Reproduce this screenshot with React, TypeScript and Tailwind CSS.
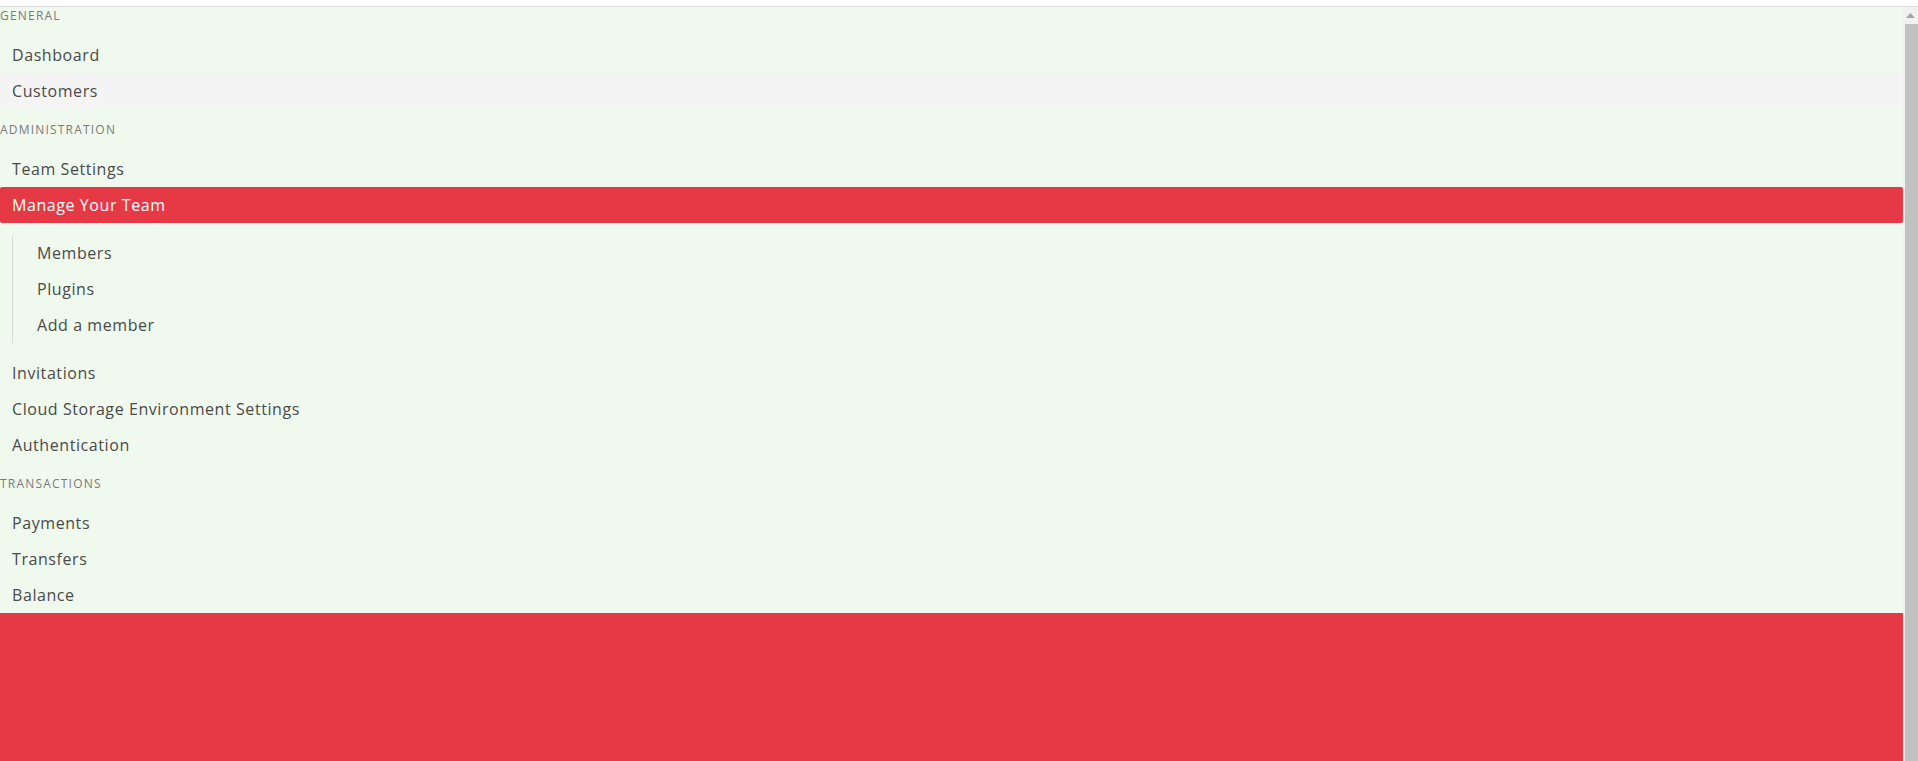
import React from "react";

type Item = { label: string; active?: boolean; hover?: boolean; children?: string[] };

const sections: { title: string; items: Item[] }[] = [
  {
    title: "General",
    items: [{ label: "Dashboard" }, { label: "Customers", hover: true }],
  },
  {
    title: "Administration",
    items: [
      { label: "Team Settings" },
      { label: "Manage Your Team", active: true, children: ["Members", "Plugins", "Add a member"] },
      { label: "Invitations" },
      { label: "Cloud Storage Environment Settings" },
      { label: "Authentication" },
    ],
  },
  {
    title: "Transactions",
    items: [{ label: "Payments" }, { label: "Transfers" }, { label: "Balance" }],
  },
];

function Link({ item }: { item: Item }) {
  const base = "block px-[12px] py-[8px] rounded-[2px] leading-[20px] text-[16px] tracking-[0.036em]";
  const cls = item.active
    ? `${base} bg-[#e63946] text-white`
    : item.hover
    ? `${base} bg-[#f4f4f4] text-[#4a4a4a]`
    : `${base} text-[#4a4a4a]`;
  return <a className={cls}>{item.label}</a>;
}

export default function App() {
  return (
    <div className="h-[761px] overflow-hidden bg-white font-['Open_Sans',sans-serif]">
      <div className="h-[6px]" />
      <div className="flex h-[755px] border-t border-[#dedede]">
        <div className="flex flex-1 flex-col bg-[#f0f9ee]">
          <aside>
            {sections.map((s, i) => (
              <div key={s.title}>
                <p
                  className={`${i === 0 ? "mt-0" : "mt-[12px]"} mb-[12px] text-[12px] leading-[18px] uppercase tracking-[0.1em] text-[#7a7a7a]`}
                >
                  {s.title}
                </p>
                <ul className="leading-[20px]">
                  {s.items.map((it) => (
                    <li key={it.label}>
                      <Link item={it} />
                      {it.children && (
                        <ul className="m-[12px] border-l border-[#dbdbdb] pl-[12px]">
                          {it.children.map((c) => (
                            <li key={c}>
                              <Link item={{ label: c }} />
                            </li>
                          ))}
                        </ul>
                      )}
                    </li>
                  ))}
                </ul>
              </div>
            ))}
          </aside>
          <div className="flex-1 bg-[#e63946]" />
        </div>
        <div className="flex w-[15px] flex-col bg-[#f1f1f1]">
          <div className="flex h-[17px] items-center justify-center">
            <svg width="9" height="6" viewBox="0 0 9 6">
              <polygon points="4.5,0 9,5 0,5" fill="#a3a3a3" />
            </svg>
          </div>
          <div className="ml-[2px] flex-1 bg-[#c1c1c1]" />
        </div>
      </div>
    </div>
  );
}
